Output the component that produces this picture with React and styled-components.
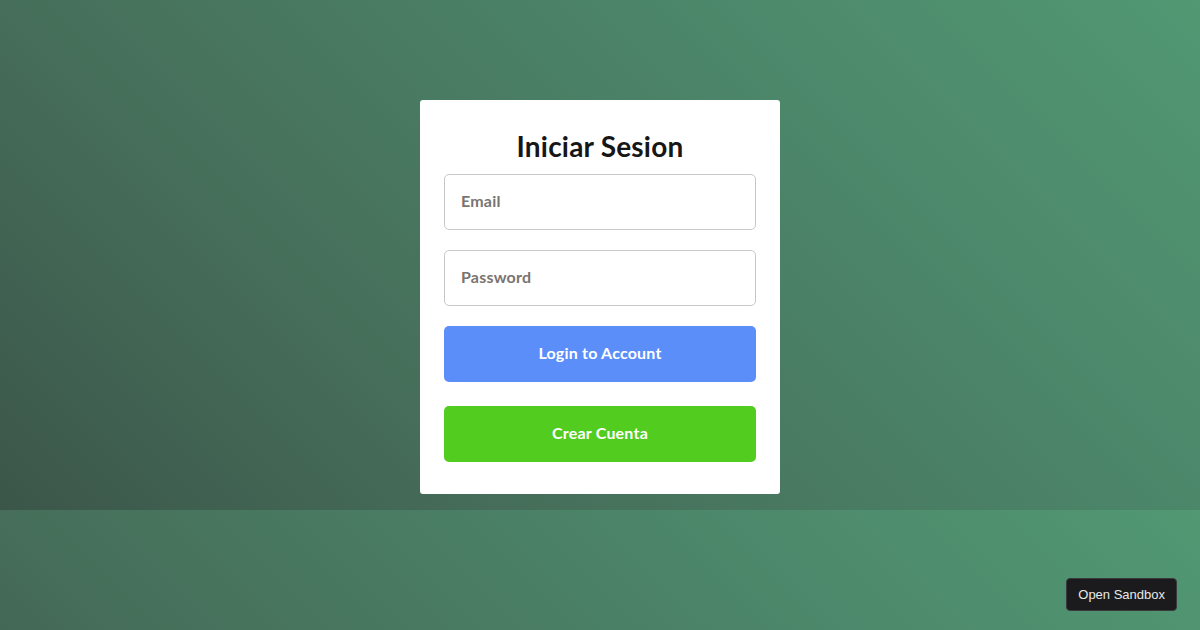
import React from "react";
import styled, { createGlobalStyle } from "styled-components";

const GlobalStyle = createGlobalStyle`
  html, body {
    margin: 0;
    padding: 0;
  }
  body {
    min-height: 630px;
    font-family: "Lato", "Noto Sans", sans-serif;
    background-image: linear-gradient(45deg, #3b5649 0%, #466e5a 30%, #4c876a 70%, #519873 100%);
    background-size: 100% 510px;
    background-repeat: repeat-y;
  }
`;

const Page = styled.div`
  display: flex;
  justify-content: center;
  padding-top: 100px;
`;

const Card = styled.form`
  width: 360px;
  box-sizing: border-box;
  background: #ffffff;
  border-radius: 3px;
  padding: 28px 24px 32px;
  display: flex;
  flex-direction: column;
`;

const Title = styled.h1`
  margin: 0 0 10px;
  text-align: center;
  font-size: 28px;
  font-weight: 700;
  color: #161616;
  line-height: 36px;
  letter-spacing: 0.2px;
`;

const Input = styled.input`
  height: 56px;
  box-sizing: border-box;
  border: 1px solid #c8c8c8;
  border-radius: 5px;
  padding: 0 16px 4px;
  margin-bottom: 20px;
  font-family: inherit;
  font-size: 16px;
  font-weight: 700;
  letter-spacing: 0.2px;
  outline: none;

  &::placeholder {
    color: #7a746f;
  }
`;

const Button = styled.button`
  height: 56px;
  border: none;
  border-radius: 5px;
  padding: 0 0 4px;
  background: ${(p) => p.$bg};
  color: #ffffff;
  font-family: inherit;
  font-size: 16px;
  font-weight: 700;
  letter-spacing: 0.2px;
  cursor: pointer;
  margin-top: ${(p) => p.$mt || 0}px;
`;

const SandboxButton = styled.button`
  position: fixed;
  right: 23px;
  bottom: 19px;
  height: 33px;
  padding: 0 11px;
  background: #1b1b1d;
  border: 1px solid #3a3a3c;
  border-radius: 4px;
  color: #e8e8e8;
  font-family: "Liberation Sans", Arial, sans-serif;
  font-size: 13px;
`;

export default function App() {
  return (
    <>
      <GlobalStyle />
      <Page>
        <Card onSubmit={(e) => e.preventDefault()}>
          <Title>Iniciar Sesion</Title>
          <Input type="email" placeholder="Email" />
          <Input type="password" placeholder="Password" />
          <Button $bg="#5b8ef9">Login to Account</Button>
          <Button $bg="#52cc1f" $mt={24}>Crear Cuenta</Button>
        </Card>
      </Page>
      <SandboxButton>Open Sandbox</SandboxButton>
    </>
  );
}
